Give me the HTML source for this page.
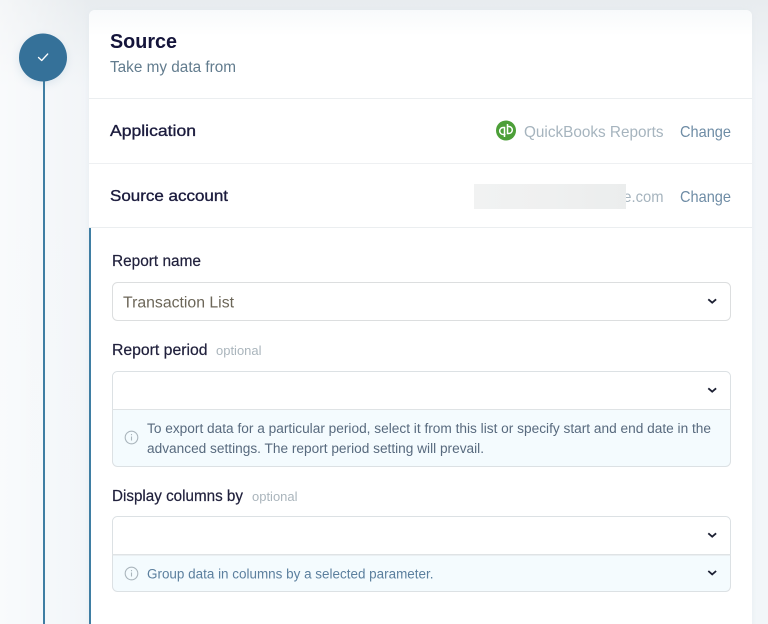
<!DOCTYPE html>
<html>
<head>
<meta charset="utf-8">
<style>
html,body{margin:0;padding:0;width:768px;height:624px;overflow:hidden;background:#f4f7fa}
svg{display:block}
text{font-family:"Liberation Sans",sans-serif}
</style>
</head>
<body>
<svg width="768" height="624" viewBox="0 0 768 624" xmlns="http://www.w3.org/2000/svg">
<defs>
<linearGradient id="bg" x1="0" y1="0" x2="0" y2="1"><stop offset="0" stop-color="#e8ecef"/><stop offset="0.14" stop-color="#f2f5f8"/><stop offset="1" stop-color="#f2f6f9"/></linearGradient>
<linearGradient id="top" x1="0" y1="0" x2="0" y2="1"><stop offset="0" stop-color="#f8fafb"/><stop offset="1" stop-color="#ffffff"/></linearGradient>
<linearGradient id="left" x1="0" y1="0" x2="1" y2="0"><stop offset="0" stop-color="#ffffff" stop-opacity=".55"/><stop offset="1" stop-color="#ffffff" stop-opacity="0"/></linearGradient>
<linearGradient id="mosaic" x1="0" y1="0" x2="1" y2="0"><stop offset="0" stop-color="#f1f2f2"/><stop offset="0.5" stop-color="#eff0f0"/><stop offset="1" stop-color="#ebeded"/></linearGradient>
<radialGradient id="glow"><stop offset="0.6" stop-color="#c9d8e3" stop-opacity=".5"/><stop offset="1" stop-color="#f4f7fa" stop-opacity="0"/></radialGradient>
<filter id="shadow" x="-5%" y="-5%" width="110%" height="110%"><feGaussianBlur stdDeviation="3"/></filter>
<clipPath id="cardclip"><path d="M89 624V16a6 6 0 0 1 6-6H746a6 6 0 0 1 6 6V624Z"/></clipPath>
</defs>
<rect width="768" height="624" fill="url(#bg)"/>
<rect x="0" y="0" width="89" height="624" fill="url(#left)"/>
<circle cx="43" cy="60" r="34" fill="url(#glow)"/>
<rect x="43" y="78" width="2" height="546" fill="#3f7ea3"/>
<circle cx="43" cy="57.500" r="24" fill="#357199"/>
<path d="M38.500 57.500l3.200 3 6-6.500" fill="none" stroke="#fff" stroke-width="1.300" stroke-linecap="round" stroke-linejoin="round"/>

<path d="M89 630V16a6 6 0 0 1 6-6H746a6 6 0 0 1 6 6V630Z" fill="#dfe5ea" filter="url(#shadow)" opacity=".6"/>
<path d="M89 624V16a6 6 0 0 1 6-6H746a6 6 0 0 1 6 6V624Z" fill="#fff"/>
<g clip-path="url(#cardclip)">
<rect x="89" y="10" width="663" height="26" fill="url(#top)"/>
<rect x="89" y="98" width="663" height="1" fill="#ebeef0"/>
<rect x="89" y="163" width="663" height="1" fill="#eef0f2"/>
<rect x="89" y="227" width="663" height="1" fill="#ebeef0"/>
<rect x="89" y="228" width="2" height="396" fill="#3f7ea3"/>
</g>

<text x="110" y="48" font-size="20" font-weight="700" fill="#14143a" textLength="67" lengthAdjust="spacingAndGlyphs">Source</text>
<text x="110" y="72" font-size="15.500" fill="#627c8e" textLength="126" lengthAdjust="spacingAndGlyphs">Take my data from</text>
<text x="110" y="136" font-size="16" fill="#1b1b3d" stroke="#1b1b3d" stroke-width=".35" textLength="86" lengthAdjust="spacingAndGlyphs">Application</text>
<text x="110" y="201" font-size="16" fill="#1b1b3d" stroke="#1b1b3d" stroke-width=".35" textLength="118" lengthAdjust="spacingAndGlyphs">Source account</text>

<circle cx="506" cy="130.500" r="10" fill="#4c9f38"/>
<g fill="none" stroke="#fff" stroke-width="1.500">
<path d="M505.500 134.500h-2.300a3.500 3.500 0 0 1 0-7h1.300v9.500"/>
<path d="M506.500 126.500h0v0M507.500 124v9.500h1.300a3.500 3.500 0 0 0 0-7h-1.300"/>
</g>
<text x="524" y="137" font-size="16" fill="#a6b4be" textLength="139.500" lengthAdjust="spacingAndGlyphs">QuickBooks Reports</text>
<text x="680" y="137" font-size="16" fill="#6e8ca5" textLength="51" lengthAdjust="spacingAndGlyphs">Change</text>
<text x="620" y="202" font-size="16" fill="#a6b4be" textLength="43.500" lengthAdjust="spacingAndGlyphs">le.com</text>
<rect x="474" y="184" width="152" height="25" fill="url(#mosaic)"/>
<text x="680" y="202" font-size="16" fill="#6e8ca5" textLength="51" lengthAdjust="spacingAndGlyphs">Change</text>

<text x="112" y="266" font-size="15.500" fill="#20203c" stroke="#20203c" stroke-width=".2" textLength="89" lengthAdjust="spacingAndGlyphs">Report name</text>
<rect x="112.500" y="282.500" width="618" height="38" rx="5" fill="#fff" stroke="#dcdedf"/>
<text x="123" y="307.500" font-size="15.500" fill="#6c6658" textLength="111" lengthAdjust="spacingAndGlyphs">Transaction List</text>
<path d="M708.300 299.300l3.900 3.400 3.900-3.400" fill="none" stroke="#1c2033" stroke-width="1.800"/>

<text x="112" y="355" font-size="15.500" fill="#20203c" stroke="#20203c" stroke-width=".2" textLength="95.500" lengthAdjust="spacingAndGlyphs">Report period</text>
<text x="216" y="355" font-size="12.500" fill="#aab5bc" textLength="45.500" lengthAdjust="spacingAndGlyphs">optional</text>
<rect x="112.500" y="371.500" width="618" height="95" rx="5" fill="#f4fbfe" stroke="#dce1e4"/>
<path d="M113 409V376.500a4.500 4.500 0 0 1 4.500-4.500H725.500a4.500 4.500 0 0 1 4.500 4.500V409Z" fill="#fff"/>
<rect x="112" y="409" width="619" height="1" fill="#dfe3e5"/>
<path d="M708.300 388.300l3.900 3.400 3.900-3.400" fill="none" stroke="#1c2033" stroke-width="1.800"/>
<circle cx="131.500" cy="437.500" r="6.300" fill="none" stroke="#aab5bc" stroke-width="1.100"/>
<path d="M131.500 436.500v4M131.500 434v1.200" stroke="#aab5bc" stroke-width="1.100" fill="none"/>
<text x="147" y="433" font-size="13.500" fill="#586a7e" textLength="564" lengthAdjust="spacingAndGlyphs">To export data for a particular period, select it from this list or specify start and end date in the</text>
<text x="147" y="453" font-size="13.500" fill="#586a7e" textLength="337" lengthAdjust="spacingAndGlyphs">advanced settings. The report period setting will prevail.</text>

<text x="112" y="501" font-size="15.500" fill="#20203c" stroke="#20203c" stroke-width=".2" textLength="131" lengthAdjust="spacingAndGlyphs">Display columns by</text>
<text x="252" y="501" font-size="12.500" fill="#aab5bc" textLength="45.500" lengthAdjust="spacingAndGlyphs">optional</text>
<rect x="112.500" y="516.500" width="618" height="75" rx="5" fill="#f4fbfe" stroke="#dce1e4"/>
<path d="M113 554V521.500a4.500 4.500 0 0 1 4.500-4.500H725.500a4.500 4.500 0 0 1 4.500 4.500V554Z" fill="#fff"/>
<rect x="112" y="554" width="619" height="1.500" fill="#dfe3e5"/>
<path d="M708.300 533.300l3.900 3.400 3.900-3.400" fill="none" stroke="#1c2033" stroke-width="1.800"/>
<path d="M708.300 571l3.900 3.400 3.900-3.400" fill="none" stroke="#1c2033" stroke-width="1.800"/>
<circle cx="131.500" cy="573.500" r="6.300" fill="none" stroke="#aab5bc" stroke-width="1.100"/>
<path d="M131.500 572.500v4M131.500 570v1.200" stroke="#aab5bc" stroke-width="1.100" fill="none"/>
<text x="147" y="578.500" font-size="13.500" fill="#5b7f9e" textLength="286.500" lengthAdjust="spacingAndGlyphs">Group data in columns by a selected parameter.</text>
</svg>
</body>
</html>
